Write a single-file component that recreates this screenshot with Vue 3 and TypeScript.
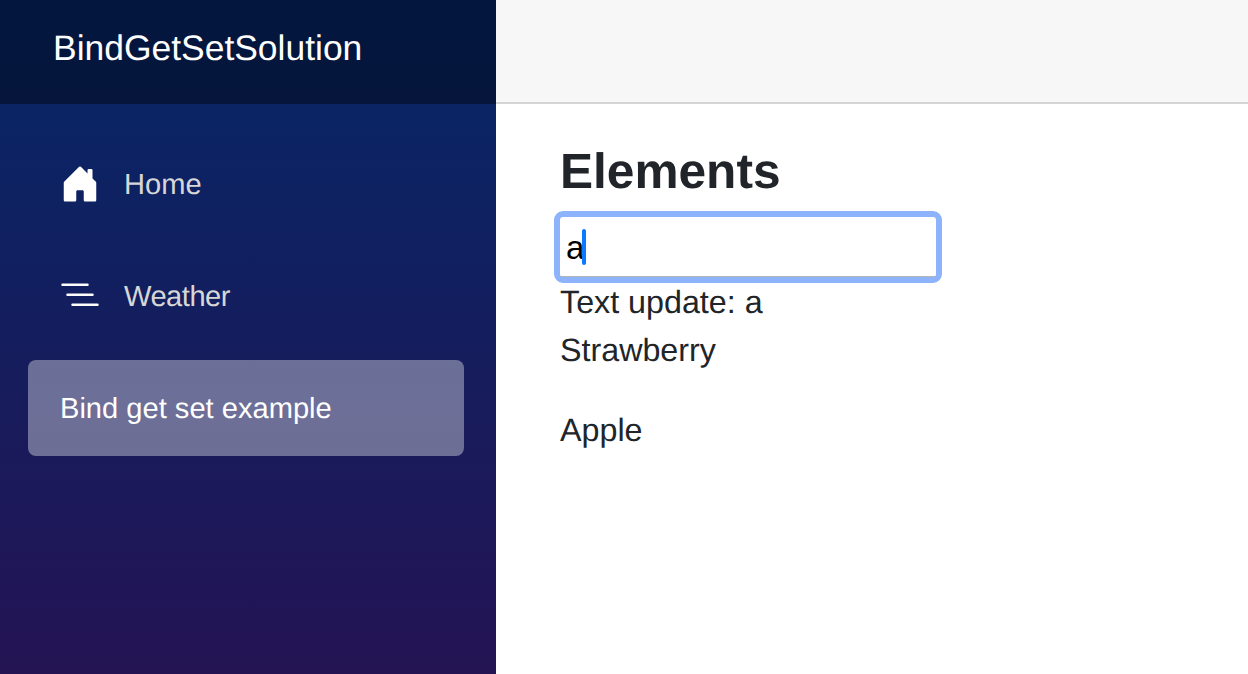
<script setup lang="ts">
const fruits: string[] = ['Strawberry', 'Apple']
</script>

<template>
  <div class="page">
    <aside class="sidebar">
      <div class="brand">BindGetSetSolution</div>
      <nav class="nav">
        <a class="link">
          <svg class="icon" viewBox="0 0 16 16" fill="#fff"><path d="M6.5 14.5v-3.505c0-.245.25-.495.5-.495h2c.25 0 .5.25.5.5v3.5a.5.5 0 0 0 .5.5h4a.5.5 0 0 0 .5-.5v-7a.5.5 0 0 0-.146-.354L13 5.793V2.5a.5.5 0 0 0-.5-.5h-1a.5.5 0 0 0-.5.5v1.293L8.354 1.146a.5.5 0 0 0-.708 0l-6 6A.5.5 0 0 0 1.5 7.5v7a.5.5 0 0 0 .5.5h4a.5.5 0 0 0 .5-.5Z"/></svg>
          <span class="label">Home</span>
        </a>
        <a class="link">
          <svg class="icon" viewBox="0 0 16 16" fill="#fff"><path fill-rule="evenodd" d="M4.5 11.5A.5.5 0 0 1 5 11h10a.5.5 0 0 1 0 1H5a.5.5 0 0 1-.5-.5zm-2-4A.5.5 0 0 1 3 7h10a.5.5 0 0 1 0 1H3a.5.5 0 0 1-.5-.5zm-2-4A.5.5 0 0 1 1 3h10a.5.5 0 0 1 0 1H1a.5.5 0 0 1-.5-.5z"/></svg>
          <span class="label tight">Weather</span>
        </a>
        <a class="link active"><span class="label">Bind get set example</span></a>
      </nav>
    </aside>
    <main class="main">
      <div class="topbar"></div>
      <article class="content">
        <h1>Elements</h1>
        <div class="field">
          <input class="input" type="text" value="a" readonly />
          <span class="caret"></span>
        </div>
        <div class="line">Text update: a</div>
        <p v-for="fruit in fruits" :key="fruit" class="line para">{{ fruit }}</p>
      </article>
    </main>
  </div>
</template>

<style>
html, body { margin: 0; background: #fff; }
</style>

<style scoped>
.page {
  display: flex;
  height: 674px;
  overflow: hidden;
  font-family: "Liberation Sans", Arial, sans-serif;
  color: #212529;
  text-rendering: geometricPrecision;
}
.sidebar {
  width: 496px;
  flex: none;
  background-image: linear-gradient(180deg, rgb(5, 39, 103) 0, #3a0647 1155px);
}
.brand {
  height: 104px;
  box-sizing: border-box;
  padding-left: 53px;
  padding-bottom: 7px;
  display: flex;
  align-items: center;
  background: rgba(0, 0, 0, 0.4);
  color: #fff;
  font-size: 35.45px;
}
.nav {
  display: flex;
  flex-direction: column;
  gap: 16px;
  padding: 32px 32px 0 28px;
}
.link {
  height: 96px;
  box-sizing: border-box;
  display: flex;
  align-items: center;
  padding-left: 32px;
  border-radius: 8px;
  color: #d7d7d7;
  font-size: 29.1px;
}
.label {
  padding-top: 2px;
}
.tight {
  letter-spacing: -0.5px;
}
.icon {
  width: 40px;
  height: 40px;
  margin-right: 24px;
  flex: none;
}
.active {
  background: rgba(255, 255, 255, 0.37);
  color: #fff;
}
.main {
  flex: 1;
  min-width: 0;
}
.topbar {
  height: 102px;
  background: #f7f7f7;
  border-bottom: 2px solid #d6d5d5;
}
.content {
  padding: 38px 0 0 64px;
}
h1 {
  margin: 0 0 17px;
  font-size: 49.6px;
  line-height: 58px;
  font-weight: 700;
  color: #212529;
}
.field {
  position: relative;
  width: 376px;
  height: 60px;
  margin-bottom: 1px;
}
.input {
  display: block;
  width: 100%;
  height: 100%;
  box-sizing: border-box;
  padding: 3px 6px 0;
  margin: 0;
  border: none;
  border-bottom: 1px solid #b4b4b4;
  outline: none;
  border-radius: 1px;
  font-family: inherit;
  font-size: 33px;
  color: #000;
  background: #fff;
}
.field::after {
  content: "";
  position: absolute;
  inset: -6px;
  border-radius: 9px;
  border: 6px solid #8cb3fb;
  pointer-events: none;
}
.caret {
  position: absolute;
  left: 22px;
  top: 12px;
  width: 4px;
  height: 36px;
  border-radius: 2px;
  background: #0a7aff;
}
.line {
  font-size: 32.25px;
  line-height: 48px;
}
.para {
  margin: 0 0 32px;
}
</style>
